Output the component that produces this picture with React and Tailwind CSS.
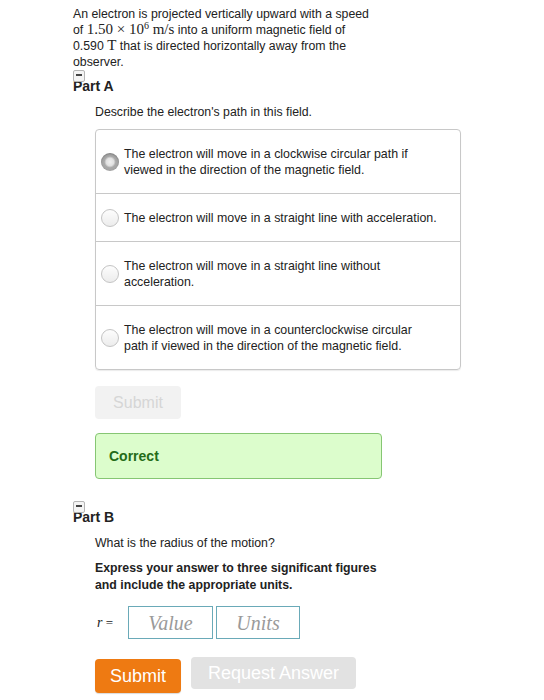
const sans = { fontFamily: '"Liberation Sans", Arial, sans-serif' };
const serif = { fontFamily: '"Liberation Serif", "Times New Roman", serif' };

const options = [
  "The electron will move in a clockwise circular path if viewed in the direction of the magnetic field.",
  "The electron will move in a straight line with acceleration.",
  "The electron will move in a straight line without acceleration.",
  "The electron will move in a counterclockwise circular path if viewed in the direction of the magnetic field.",
];

const Toggle = () => (
  <div className="w-[12px] h-[12px] border border-[#b5b5b5] bg-[#f4f4f4] rounded-[2px] flex items-start justify-center">
    <div className="w-[6px] h-[2px] bg-[#444] mt-[3px]"></div>
  </div>
);

const PartHeader = ({ label }) => (
  <div className="relative pt-[7px]">
    <div className="absolute left-0 top-0">
      <Toggle />
    </div>
    <h3 className="text-[14px] font-bold text-[#222] leading-[18px]">{label}</h3>
  </div>
);

const Radio = ({ checked }) =>
  checked ? (
    <div className="w-[18px] h-[18px] rounded-full bg-[radial-gradient(circle,#f0f0f0_0%,#e0e0e0_30%,#a9a9a9_45%,#a0a0a0_100%)] shadow-[inset_0_1px_2px_rgba(0,0,0,0.25)]"></div>
  ) : (
    <div className="w-[18px] h-[18px] rounded-full border border-[#c4c4c4] bg-gradient-to-b from-[#fdfdfd] to-[#ececec]"></div>
  );

export default function App() {
  return (
    <div className="bg-white w-[544px] min-h-[700px] text-[#222]" style={sans}>
      <div className="pl-[73px] pr-[20px] pt-[6px]">
        {/* Problem statement */}
        <p className="text-[12.3px] leading-[16px] w-[302px]">
          An electron is projected vertically upward with a speed of{" "}
          <span className="text-[15px] leading-none" style={serif}>
            1.50 × 10<sup className="text-[10px] leading-none">6</sup> m/s
          </span>{" "}
          into a uniform magnetic field of 0.590{" "}
          <span className="text-[15px] leading-none" style={serif}>T</span> that is directed
          horizontally away from the observer.
        </p>

        {/* Part A */}
        <PartHeader label="Part A" />
        <div className="pl-[22px]">
          <p className="text-[12.3px] leading-[16px] mt-[9px]">
            Describe the electron's path in this field.
          </p>

          <div className="mt-[9px] w-[366px] border border-[#c8c8c8] rounded-[4px] shadow-[0_1px_1px_rgba(0,0,0,0.08)]">
            {options.map((opt, i) => (
              <div
                key={i}
                className={
                  "flex items-center gap-[5px] pl-[5px] py-[15.5px] " +
                  (i > 0 ? "border-t border-[#c8c8c8]" : "")
                }
              >
                <div className="shrink-0 -my-[1px]">
                  <Radio checked={i === 0} />
                </div>
                <span className="w-[314px] text-[12.4px] leading-[16px]">{opt}</span>
              </div>
            ))}
          </div>

          <button className="mt-[16px] w-[86px] h-[33px] bg-[#f2f2f2] text-[#d6d6d6] text-[16px] rounded-[4px]">
            Submit
          </button>

          <div className="mt-[14px] w-[287px] h-[46px] bg-[#dcfdcc] border border-[#86c673] rounded-[4px] flex items-center pl-[13px]">
            <span className="text-[14px] font-bold text-[#246b18]">Correct</span>
          </div>
        </div>

        {/* Part B */}
        <div className="mt-[22px]">
          <PartHeader label="Part B" />
        </div>
        <div className="pl-[22px]">
          <p className="text-[12.3px] leading-[16px] mt-[9px]">
            What is the radius of the motion?
          </p>
          <p className="text-[12.3px] leading-[17px] font-bold mt-[9px]">
            Express your answer to three significant figures
            <br />
            and include the appropriate units.
          </p>

          <div className="mt-[12px] flex items-center">
            <span className="w-[33px] pl-[2px] text-[13px]" style={serif}>
              <i className="text-[14px]">r</i> =
            </span>
            <div
              className="w-[85px] h-[33px] border border-[#6aaab8] flex items-center justify-center text-[20px] italic text-[#9a9a9a]"
              style={serif}
            >
              Value
            </div>
            <div
              className="ml-[3px] w-[84px] h-[33px] border border-[#6aaab8] flex items-center justify-center text-[20px] italic text-[#9a9a9a]"
              style={serif}
            >
              Units
            </div>
          </div>

          <div className="mt-[18px] flex items-start gap-[10px]">
            <button className="mt-[2px] w-[86px] h-[34px] bg-[#ee7a12] text-white text-[18px] rounded-[4px] shadow-[0_1px_1px_rgba(0,0,0,0.15)]">
              Submit
            </button>
            <button className="w-[165px] h-[32px] bg-[#e2e2e2] text-white text-[18px] rounded-[4px]">
              Request Answer
            </button>
          </div>
        </div>
      </div>
    </div>
  );
}
